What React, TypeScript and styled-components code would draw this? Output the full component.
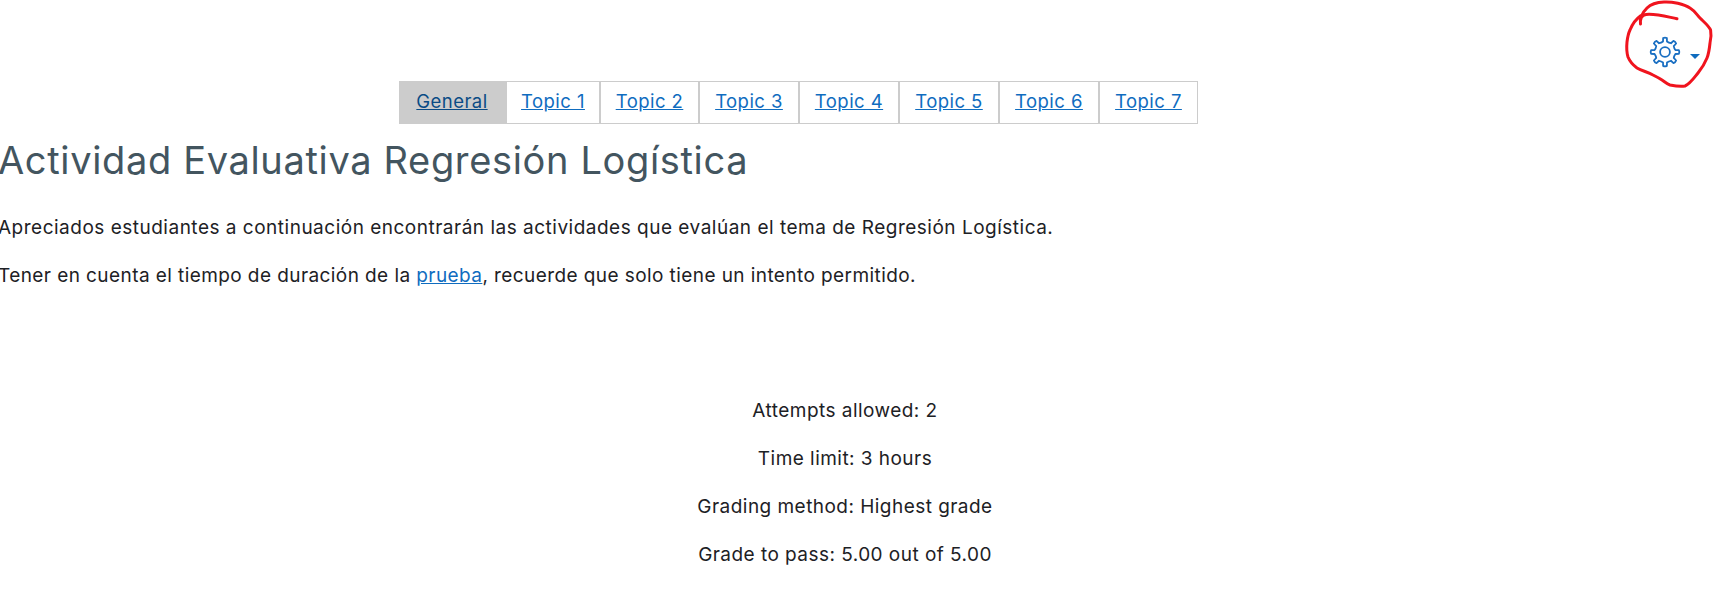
import React from "react";
import styled, { createGlobalStyle } from "styled-components";

const Global = createGlobalStyle`
  html, body { margin: 0; padding: 0; background: #fff; overflow: hidden; }
  body { font-family: Inter, "Open Sans", "Liberation Sans", sans-serif; color: #1d2125; }
`;

const Page = styled.div`
  position: relative;
  width: 1715px;
  height: 599px;
  overflow: hidden;
  display: flex;
  flex-direction: column;
`;

const MenuBar = styled.div`
  height: 81px;
  display: flex;
  justify-content: flex-end;
  align-items: flex-start;
  padding: 36px 15px 0 0;
  box-sizing: border-box;
  gap: 9px;
`;

const Caret = styled.span`
  width: 0;
  height: 0;
  margin-top: 18px;
  border-left: 5.5px solid transparent;
  border-right: 5.5px solid transparent;
  border-top: 5.5px solid #0f6cbf;
`;

const Tabs = styled.nav`
  display: flex;
  align-self: flex-start;
  margin-left: 399px;
  height: 43px;
  box-sizing: border-box;
`;

const Tab = styled.a<{ $active?: boolean; $w: number }>`
  width: ${(p) => p.$w}px;
  box-sizing: border-box;
  display: flex;
  align-items: center;
  justify-content: center;
  border: 1px solid #ccc;
  border-left-width: ${(p) => (p.$active ? 0 : 1)}px;
  background: ${(p) => (p.$active ? "#ccc" : "#fff")};
  color: ${(p) => (p.$active ? "#0a4b85" : "#0f6cbf")};
  text-decoration: underline;
  font-size: 18.5px;
  letter-spacing: 0.45px;
  padding-bottom: 4px;
`;

const Title = styled.h1`
  margin: 14px 0 0 -2px;
  font-size: 38px;
  line-height: 44px;
  font-weight: 400;
  color: #43555f;
  letter-spacing: 0.65px;
  white-space: nowrap;
`;

const Para = styled.p`
  margin: 33px 0 0 -2px;
  font-size: 19px;
  line-height: 26px;
  letter-spacing: 0.5px;
  white-space: nowrap;
`;

const Second = styled(Para)`
  margin-top: 22px;
  letter-spacing: 0.42px;
`;

const Link = styled.a`
  color: #0f6cbf;
  text-decoration: underline;
`;

const Info = styled.div`
  margin-top: 109px;
  width: 1690px;
  display: flex;
  flex-direction: column;
  gap: 22px;
  text-align: center;
  font-size: 19px;
  line-height: 26px;
  letter-spacing: 0.46px;
`;

const Scribble = styled.svg`
  position: absolute;
  left: 1600px;
  top: 0;
`;

const gearPath = (() => {
  const teeth = 8;
  const cx = 16, cy = 16, ro = 14, ri = 10.6;
  const pt = (r: number, a: number) => `${(cx + r * Math.cos(a)).toFixed(2)} ${(cy + r * Math.sin(a)).toFixed(2)}`;
  const step = (Math.PI * 2) / teeth;
  let d = "";
  for (let i = 0; i < teeth; i++) {
    const a = i * step - Math.PI / 2;
    d += `${i === 0 ? "M" : "Q"}${i === 0 ? "" : pt(ri * 0.93, a - step / 2) + " "}${pt(ri, a - step * 0.24)}`;
    d += `L${pt(ro, a - step * 0.17)}Q${pt(ro + 0.8, a)} ${pt(ro, a + step * 0.17)}L${pt(ri, a + step * 0.24)}`;
  }
  d += `Q${pt(ri * 0.93, -Math.PI / 2 - step / 2)} ${pt(ri, -Math.PI / 2 - step * 0.24)}Z`;
  return d;
})();

const Gear = () => (
  <svg width="32" height="32" viewBox="0 0 32 32" fill="none" stroke="#1a6fc2" strokeWidth="1.8" strokeLinejoin="round">
    <circle cx="16" cy="16" r="4.9" />
    <path d={gearPath} />
  </svg>
);

const tabs: [string, number][] = [
  ["General", 107], ["Topic 1", 94], ["Topic 2", 99], ["Topic 3", 100], ["Topic 4", 100], ["Topic 5", 100], ["Topic 6", 100], ["Topic 7", 99],
];

export default function App() {
  return (
    <Page>
      <Global />
      <MenuBar>
        <Gear />
        <Caret />
      </MenuBar>
      <Tabs>
        {tabs.map(([t, w], i) => (
          <Tab key={t} $active={i === 0} $w={w}>{t}</Tab>
        ))}
      </Tabs>
      <Title>Actividad Evaluativa Regresión Logística</Title>
      <Para>Apreciados estudiantes a continuación encontrarán las actividades que evalúan el tema de Regresión Logística.</Para>
      <Second>Tener en cuenta el tiempo de duración de la <Link>prueba</Link>, recuerde que solo tiene un intento permitido.</Second>
      <Info>
        <span>Attempts allowed: 2</span>
        <span>Time limit: 3 hours</span>
        <span>Grading method: Highest grade</span>
        <span>Grade to pass: 5.00 out of 5.00</span>
      </Info>
      <Scribble width="115" height="125" viewBox="0 0 115 125" fill="none" stroke="#f0141e" strokeWidth="3" strokeLinecap="round" strokeLinejoin="round">
        <path d="M77 18.7C68 17 56 13.5 46 14.5C42 15 40 19 40.5 24C39.5 18 43 12 47 8C51 4 57 2.3 64 2C72 1.5 84 4 90 8C95 11 97 15 100 18C104 22 109 26 110.6 30C111.5 35 111 39 110 43C109.5 48 109 53 107 58C105 63 102 68 98 73C94 78 90 84 85 86C80 87 75 86 70 85C67 84 65 82 62 80C59 78 57 77 53 75C48 72 42 71 37 68C33 65 30 62 28 57C26.5 52 26.5 47 27 42C27.5 38 28 34 30 30C32 25 36 19 41 15.5" />
      </Scribble>
    </Page>
  );
}
